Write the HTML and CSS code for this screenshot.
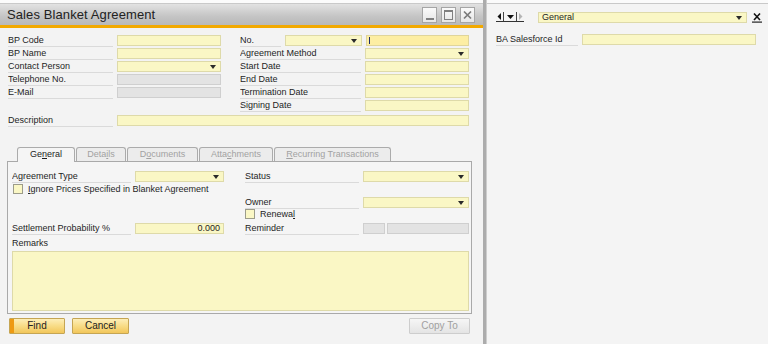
FILE: index.html
```html
<!DOCTYPE html>
<html>
<head>
<meta charset="utf-8">
<title>Sales Blanket Agreement</title>
<link rel="stylesheet" href="styles.css">
</head>
<body>
<div class="app">
  <section class="win">
    <div class="strip"></div>
    <header class="titlebar">
      <span class="title">Sales Blanket Agreement</span>
      <div class="wbtns">
        <span class="wbtn"><svg width="15" height="16" viewBox="0 0 15 16"><rect x="4" y="11" width="8" height="2" fill="#808080"/></svg></span>
        <span class="wbtn"><svg width="15" height="16" viewBox="0 0 15 16"><rect x="3.5" y="3.5" width="8" height="9" fill="none" stroke="#808080"/><rect x="3.5" y="3.5" width="8" height="1.5" fill="#808080"/></svg></span>
        <span class="wbtn"><svg width="15" height="16" viewBox="0 0 15 16"><path d="M4 4.5 L11 11.5 M11 4.5 L4 11.5" stroke="#7a7a7a" stroke-width="1.7"/></svg></span>
      </div>
    </header>
    <div class="accent"></div>

    <div class="head">
      <div class="col col-l">
        <div class="row"><span class="lbl">BP Code</span><span class="fld"></span></div>
        <div class="row"><span class="lbl">BP Name</span><span class="fld"></span></div>
        <div class="row"><span class="lbl">Contact Person</span><span class="fld combo"></span></div>
        <div class="row"><span class="lbl">Telephone No.</span><span class="fld gray"></span></div>
        <div class="row"><span class="lbl">E-Mail</span><span class="fld gray"></span></div>
      </div>
      <div class="col col-r">
        <div class="row row-no"><span class="lbl">No.</span><span class="fld combo"></span><span class="fld active"></span></div>
        <div class="row"><span class="lbl">Agreement Method</span><span class="fld combo"></span></div>
        <div class="row"><span class="lbl">Start Date</span><span class="fld"></span></div>
        <div class="row"><span class="lbl">End Date</span><span class="fld"></span></div>
        <div class="row"><span class="lbl">Termination Date</span><span class="fld"></span></div>
        <div class="row"><span class="lbl">Signing Date</span><span class="fld"></span></div>
      </div>
    </div>
    <div class="row desc"><span class="lbl">Description</span><span class="fld"></span></div>

    <nav class="tabs">
      <span class="tab tab-general active">Ge<u>n</u>eral</span>
      <span class="tab tab-details">Deta<u>i</u>ls</span>
      <span class="tab tab-docs">D<u>o</u>cuments</span>
      <span class="tab tab-att">Atta<u>c</u>hments</span>
      <span class="tab tab-rec"><u>R</u>ecurring Transactions</span>
    </nav>

    <div class="panel">
      <div class="pgrid">
        <div class="prow pl r1"><span class="lbl">Agreement Type</span><span class="fld combo"></span></div>
        <div class="prow pr r1"><span class="lbl">Status</span><span class="fld combo"></span></div>
        <div class="chk pl r2"><span class="box"></span><span><u>I</u>gnore Prices Specified in Blanket Agreement</span></div>
        <div class="prow pr r3"><span class="lbl">Owner</span><span class="fld combo"></span></div>
        <div class="chk pr r4"><span class="box"></span><span>Renewa<u>l</u></span></div>
        <div class="prow pl r5"><span class="lbl">Settlement Probability %</span><span class="fld num">0.000</span></div>
        <div class="prow pr r5 rem-row"><span class="lbl">Reminder</span><span class="fld gray"></span><span class="fld gray"></span></div>
      </div>
      <div class="rem-lbl">Remarks</div>
      <div class="fld remarks"></div>
    </div>

    <div class="actions">
      <button class="btn primary">Find</button>
      <button class="btn">Cancel</button>
      <button class="btn disabled">Copy To</button>
    </div>
  </section>

  <div class="splitter"></div>

  <aside class="side">
    <div class="strip"></div>
    <div class="navrow">
      <div class="navbtns">
        <span class="nb nb-prev"><svg width="7" height="9" viewBox="0 0 7 9"><path d="M5 1 L1.5 4.5 L5 8 Z" fill="#111"/></svg></span>
        <span class="nb nb-down"><svg width="11" height="9" viewBox="0 0 11 9"><path d="M2 3 L9 3 L5.5 7 Z" fill="#111"/></svg></span>
        <span class="nb nb-next"><svg width="7" height="9" viewBox="0 0 7 9"><path d="M2 1 L5.5 4.5 L2 8 Z" fill="#b5b5b5"/></svg></span>
      </div>
      <div class="fld combo nav-combo">General</div>
      <span class="closex"><svg width="10" height="11" viewBox="0 0 10 11"><path d="M2 1.5 L8 8 M8 1.5 L2 8" stroke="#111" stroke-width="1.6"/><rect x="0" y="9.5" width="10" height="1.2" fill="#222"/></svg></span>
    </div>
    <div class="row sf"><span class="lbl">BA Salesforce Id</span><span class="fld"></span></div>
  </aside>
</div>
</body>
</html>
```

FILE: styles.css
```css
* { box-sizing: border-box; }
html, body { margin: 0; padding: 0; }
body {
  background: #f3f3f3;
  font-family: "Liberation Sans", Arial, sans-serif;
  font-size: 9px;
  color: #1e1e1e;
  width: 768px;
  height: 344px;
  overflow: hidden;
}
.app { display: flex; height: 344px; }

.win { width: 483px; flex: none; display: flex; flex-direction: column; }
.strip { height: 4px; background: #fbfbfb; border-bottom: 1px solid #c9c9c9; flex: none; }

.titlebar {
  height: 21px;
  background: linear-gradient(#e2e2e2, #c4c4c4 60%, #b9b9b9);
  display: flex;
  align-items: center;
  justify-content: space-between;
  padding: 0 8px 0 7px;
}
.title { font-size: 13px; color: #222; letter-spacing: 0.1px; }
.wbtns { display: flex; gap: 4px; align-self: flex-start; margin-top: 3px; }
.wbtn {
  width: 15px; height: 16px;
  background: linear-gradient(#fafafa, #e6e6e6);
  border: 1px solid #a5a5a5;
  display: flex;
}
.wbtn svg { margin: -1px; }
.accent { height: 3px; background: #f2a900; }

.head { display: flex; padding: 7px 0 0 8px; }
.col { display: flex; flex-direction: column; }
.col-l { width: 213px; }
.col-r { width: 229px; margin-left: 19px; }

.row { display: grid; height: 13px; column-gap: 4px; align-items: start; }
.col-l .row { grid-template-columns: 105px 104px; }
.col-r .row { grid-template-columns: 121px 104px; }
.col-r .row-no { grid-template-columns: 41px 77px 103px; }

.lbl {
  height: 12px;
  line-height: 11px;
  border-bottom: 1px solid #dadada;
  white-space: nowrap;
  overflow: hidden;
}

.fld {
  position: relative;
  display: block;
  height: 11px;
  background: #faf7c5;
  border: 1px solid #dedaa9;
  line-height: 9px;
  font-size: 9px;
}
.fld.gray { background: #e3e3e3; border-color: #cfcfcf; }
.fld.active { background: #fdeea3; border-color: #e0d59b; }
.fld.active::before {
  content: ""; position: absolute; left: 2px; top: 1px; width: 1px; height: 7px; background: #1b2a6a;
}
.fld.combo::after {
  content: ""; position: absolute; right: 4px; top: 3px;
  border-left: 3px solid transparent; border-right: 3px solid transparent;
  border-top: 4px solid #2a2a2a;
}

.desc { margin: 2px 0 0 8px; grid-template-columns: 105px 352px; }

.tabs { display: flex; gap: 1px; margin: 19px 0 0 17px; height: 14px; position: relative; z-index: 1; }
.tab {
  height: 14px;
  border: 1px solid #ababab;
  border-bottom: none;
  border-radius: 3px 3px 0 0;
  background: #ececec;
  color: #a2a2a2;
  text-align: center;
  line-height: 13px;
}
.tab.active { height: 15px; background: #f5f5f5; color: #1e1e1e; }
.tab-general { width: 58px; }
.tab-details { width: 50px; }
.tab-docs { width: 71px; }
.tab-att { width: 74px; }
.tab-rec { width: 117px; }

.panel {
  margin: 0 11px 0 7px;
  height: 153px;
  border: 1px solid #a9a9a9;
  background: #f5f5f5;
  padding: 9px 3px 2px 4px;
}
.pgrid {
  display: grid;
  grid-template-columns: 212px 224px;
  grid-template-rows: 13px 13px 12px 14px 13px;
  column-gap: 21px;
}
.prow { display: grid; column-gap: 4px; align-items: start; }
.prow.pl { grid-column: 1; grid-template-columns: 119px 89px; }
.prow.pr { grid-column: 2; grid-template-columns: 114px 106px; }
.prow.rem-row { grid-template-columns: 116px 22px 82px; column-gap: 2px; }
.prow.rem-row .lbl { margin-right: 2px; }
.pl { grid-column: 1; }
.pr { grid-column: 2; }
.r1 { grid-row: 1; }
.r2 { grid-row: 2; }
.r3 { grid-row: 3; }
.r4 { grid-row: 4; }
.r5 { grid-row: 5; }
.fld.num { text-align: right; padding-right: 3px; }

.chk { display: flex; align-items: center; gap: 5px; height: 10px; line-height: 10px; }
.chk.pl { padding-left: 1px; }
.box {
  width: 10px; height: 10px; flex: none;
  background: #faf7c5;
  border: 1px solid #9c9c8a;
}

.rem-lbl { height: 13px; line-height: 10px; margin-top: 2px; }
.remarks { height: 60px; width: 457px; }

.actions { display: flex; gap: 7px; margin-top: 4px; padding: 0 13px 0 9px; }
.btn {
  height: 16px;
  width: 57px;
  font-family: "Liberation Sans", Arial, sans-serif;
  font-size: 10px;
  color: #222;
  border: 1px solid #c5a553;
  border-radius: 1px;
  background: linear-gradient(#fdeeb8, #f8dc86 50%, #f2c65a);
  padding: 0;
  line-height: 14px;
}
.btn.primary { width: 56px; box-shadow: inset 4px 0 0 #ee9a12; }
.btn.disabled {
  margin-left: auto;
  width: 61px;
  color: #a0a0a0;
  border-color: #cdcdcd;
  background: linear-gradient(#f6f6f6, #e4e4e4);
}

.splitter { width: 3px; flex: none; background: #acacac; }

.side { flex: 1; display: flex; flex-direction: column; border-left: 1px solid #cdcdcd; background: #f4f4f4; }
.navrow { display: flex; align-items: flex-start; margin: 8px 0 0 9px; height: 11px; }
.navbtns { display: flex; height: 10px; border-bottom: 1px solid #333; }
.nb { display: flex; align-items: center; justify-content: center; height: 9px; border-right: 1px solid #444; }
.nb-prev { width: 8px; }
.nb-down { width: 13px; }
.nb-next { width: 7px; border-right: none; }
.nav-combo { width: 209px; margin-left: 14px; padding-left: 3px; line-height: 9px; }
.closex { margin-left: 5px; display: flex; }
.sf { margin: 11px 0 0 9px; grid-template-columns: 82px 174px; }
```
